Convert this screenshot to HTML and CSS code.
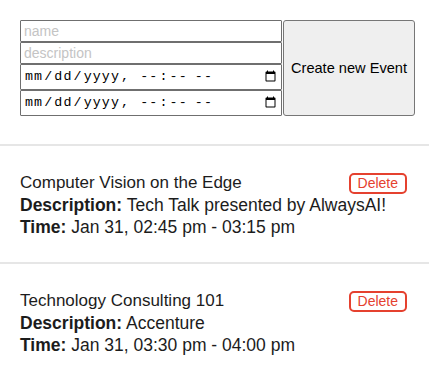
FILE: index.html
```html
<!DOCTYPE html>
<html>
  <head>
    <meta http-equiv="Content-Type" content="text/html; charset=UTF-8" />
    <meta name="viewport" content="width=device-width, initial-scale=1" />
    <title>Events</title>
    <link rel="stylesheet" href="styles.css">
  </head>

  <body>
    <form class="create-form">
      <div class="input-column">
        <input class="text-input" type="text" placeholder="name" />
        <input class="text-input" type="text" placeholder="description" />
        <input class="date-input" type="datetime-local" />
        <input class="date-input" type="datetime-local" />
      </div>
      <button class="create-button" type="button">Create new Event</button>
    </form>

    <div class="event">
      <div class="event-title">
        <span>Computer Vision on the Edge</span>
        <button class="delete-button">Delete</button>
      </div>
      <div class="event-detail"><b>Description:</b> Tech Talk presented by AlwaysAI!</div>
      <div class="event-detail"><b>Time:</b> Jan 31, 02:45 pm - 03:15 pm</div>
    </div>

    <div class="event">
      <div class="event-title">
        <span>Technology Consulting 101</span>
        <button class="delete-button">Delete</button>
      </div>
      <div class="event-detail"><b>Description:</b> Accenture</div>
      <div class="event-detail"><b>Time:</b> Jan 31, 03:30 pm - 04:00 pm</div>
    </div>
  </body>
</html>
```

FILE: styles.css
```css
body {
  margin: 0;
  font-family: "Liberation Sans", Arial, Helvetica, sans-serif;
  color: #1c1c1c;
  background-color: white;
}

.create-form {
  display: flex;
  margin: 20px 0 28px 20px;
  width: 395px;
}

.input-column {
  display: flex;
  flex-direction: column;
  width: 262px;
}

.text-input,
.date-input {
  box-sizing: border-box;
  margin: 0;
  width: 100%;
  border: 1px solid #6f6f6f;
  border-radius: 1px;
  background-color: white;
  color: black;
}

.text-input {
  height: 22px;
  padding: 1px 3px;
  font-family: "Liberation Sans", Arial, sans-serif;
  font-size: 14px;
}

.text-input::placeholder {
  color: #c4c4c4;
}

.date-input {
  height: 26px;
  padding: 1px 2px 1px 3px;
  font-family: "Liberation Mono", "Courier New", monospace;
  font-size: 13.33px;
  letter-spacing: 1.1px;
}

.create-button {
  margin-left: 1px;
  width: 132px;
  background-color: #efefef;
  border: 1px solid #767676;
  border-radius: 3px;
  color: black;
  font-family: "Liberation Sans", Arial, sans-serif;
  font-size: 14.6px;
  padding: 0;
}

.event {
  border-top: 2px solid #e6e6e6;
  padding: 26px 22px 24px 20px;
  font-size: 17px;
  line-height: 22px;
}

.event-title {
  display: flex;
  justify-content: space-between;
  align-items: center;
}

.event-detail {
  font-size: 17.5px;
}

.delete-button {
  background-color: white;
  color: #e5412f;
  border: 2px solid #e5412f;
  border-radius: 5px;
  font-family: "Liberation Sans", Arial, sans-serif;
  font-size: 14px;
  line-height: 17px;
  padding: 0 7px;
}
```
